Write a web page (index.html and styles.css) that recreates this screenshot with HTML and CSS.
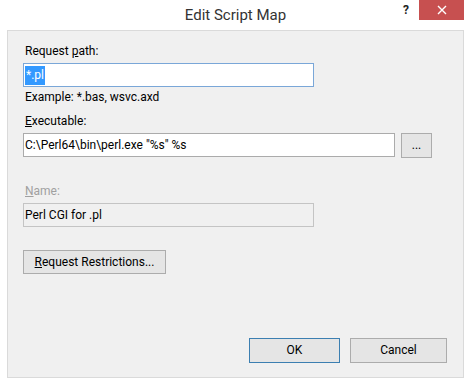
FILE: index.html
```html
<!DOCTYPE html>
<html>
	<head>
		<meta charset="UTF-8">
		<title>Edit Script Map</title>
		<link rel="stylesheet" href="styles.css">
	</head>
	<body>
	    <div class="window">
	        <div class="titlebar">
	            <span></span>
	            <span class="title">Edit Script Map</span>
	            <div class="controls">
	                <span class="help">?</span>
	                <span class="close">
	                    <svg width="10" height="10" viewBox="0 0 10 10"><path d="M1 1 L9 9 M9 1 L1 9" stroke="#fff" stroke-width="1.4"/></svg>
	                </span>
	            </div>
	        </div>
	        <div class="client">
	            <div class="label">Request <u>p</u>ath:</div>
	            <div class="field focused"><span class="selected">*.pl</span></div>
	            <div class="hint">Example: *.bas, wsvc.axd</div>

	            <div class="label"><u>E</u>xecutable:</div>
	            <div class="exec-row">
	                <div class="field exec">C:\Perl64\bin\perl.exe "%s" %s</div>
	                <div class="btn browse">...</div>
	            </div>

	            <div class="label disabled"><u>N</u>ame:</div>
	            <div class="field readonly">Perl CGI for .pl</div>

	            <div class="btn restrict"><u>R</u>equest Restrictions...</div>

	            <div class="footer">
	                <div class="btn ok">OK</div>
	                <div class="btn cancel">Cancel</div>
	            </div>
	        </div>
	    </div>
	</body>
</html>
```
FILE: styles.css
```css
body{
    margin: 0;
    padding: 0;
    background: #ffffff;
    font-family: 'Roboto', sans-serif;
    font-size: 12px;
    color: #000;
}
.window{
    width: 471px;
    height: 385px;
    display: flex;
    flex-direction: column;
    background: #ffffff;
}
.titlebar{
    height: 30px;
    display: grid;
    grid-template-columns: 1fr auto 1fr;
}
.title{
    font-size: 15px;
    color: #333;
    line-height: 30px;
}
.controls{
    justify-self: end;
    display: flex;
    align-items: flex-start;
    margin-right: 7px;
}
.help{
    font-weight: bold;
    font-size: 12px;
    color: #222;
    line-height: 21px;
    margin-right: 10px;
}
.close{
    width: 45px;
    height: 20px;
    background: #c75050;
    display: flex;
    align-items: center;
    justify-content: center;
}
.client{
    margin: 0 7px 7px 7px;
    flex: 1;
    background: #f0f0f0;
    border: 1px solid #dadada;
    padding: 13px 15px 0 15px;
    display: flex;
    flex-direction: column;
}
.label{
    line-height: 15px;
    padding-left: 2px;
    margin-bottom: 4px;
}
.label u, .btn u{
    text-decoration-thickness: 1px;
    text-underline-offset: 1px;
}
.label.disabled{
    color: #a0a0a0;
}
.field{
    height: 22px;
    border: 1px solid #ababab;
    background: #fff;
    line-height: 22px;
    padding-left: 1px;
    white-space: nowrap;
}
.field.focused{
    width: 288px;
    border-color: #7aa7d8;
    display: flex;
    align-items: center;
}
.selected{
    background: #3399ff;
    color: #fff;
    height: 19px;
    line-height: 19px;
    padding: 0 1px;
}
.hint{
    line-height: 15px;
    padding-left: 2px;
    margin: 3px 0 9px 0;
}
.exec-row{
    display: flex;
    gap: 6px;
    margin-bottom: 26px;
}
.field.exec{
    flex: 0 0 372px;
    box-sizing: border-box;
    height: 24px;
}
.btn{
    border: 1px solid #acacac;
    background: #e5e5e5;
    box-sizing: border-box;
    height: 24px;
    line-height: 22px;
    text-align: center;
}
.browse{
    width: 31px;
    height: 25px;
}
.field.readonly{
    width: 288px;
    background: #f0f0f0;
    border-color: #c4c4c4;
}
.restrict{
    width: 143px;
    margin-top: 23px;
}
.footer{
    margin-top: auto;
    margin-bottom: 14px;
    display: flex;
    justify-content: flex-end;
    gap: 10px;
    padding-right: 1px;
}
.ok{
    width: 91px;
    height: 25px;
    border-color: #3c7fb1;
}
.cancel{
    width: 97px;
    height: 25px;
}
```
